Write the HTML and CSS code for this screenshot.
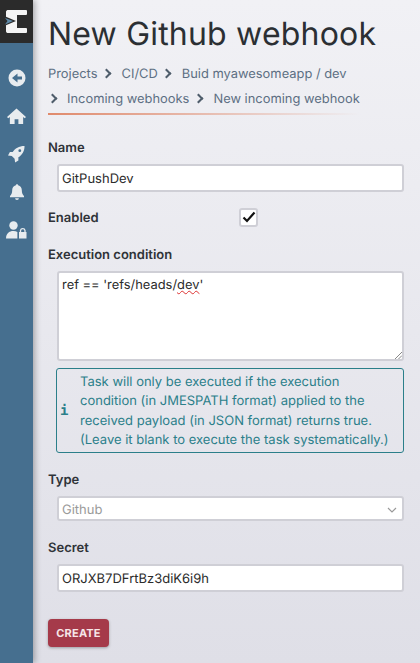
FILE: index.html
```html
<!DOCTYPE html>
<html lang="en">
<head>
  <meta charset="UTF-8">
  <title>New Github webhook</title>
  <link rel="stylesheet" href="styles.css">
</head>
<body>
  <nav class="sidebar">
    <div class="logo">
      <svg width="33" height="42" viewBox="0 0 33 42">
        <path d="M8 10h18a1 1 0 011 1v3a1 1 0 01-1 1H17v13h9a1 1 0 011 1v3a1 1 0 01-1 1H8c-1 0-1.500-.5-2-1.500V11.500C6.500 10.500 7 10 8 10z" fill="#f4f4f4"/>
        <path d="M3 15.500L16 21 3 26.500z" fill="#2b2b2b"/>
        <path d="M5 18l8 3-8 3.500 2.500-3.500z" fill="#5f8aa8"/>
      </svg>
    </div>
    <div class="nav-icons">
      <svg width="18" height="18" viewBox="0 0 18 18"><circle cx="9" cy="9" r="8.500" fill="#e8ecef"/><path d="M9.500 4.500v2.900h4.500v3.200H9.500v2.900L4 9z" fill="#466f8f"/></svg>
      <svg width="19" height="18" viewBox="0 0 20 18"><path d="M10 1L0 10l1.300 1.300L3 10v7.500h5v-5h4v5h5V10l1.700 1.300L20 10z" fill="#e8ecef"/></svg>
      <svg width="17" height="18" viewBox="0 0 18 18"><path fill-rule="evenodd" d="M17.500.500c-6 0-10 2.500-12.500 6.500H2L0 10.500l4 .5 3 3 .5 4 3.500-2v-3.500c4-2.500 6.500-6.500 6.500-12zM12.500 4a1.500 1.500 0 110 3 1.500 1.500 0 010-3z" fill="#e8ecef"/></svg>
      <svg width="14" height="18" viewBox="0 0 16 18"><path d="M8 0c-.8 0-1.300.6-1.300 1.300C4 2 2.500 4.300 2.500 7c0 3.500-1 5-2.500 6.500V15h16v-1.500C14.500 12 13.500 10.500 13.500 7c0-2.700-1.500-5-4.200-5.700C9.300.6 8.800 0 8 0zM5.800 16a2.200 2 0 004.400 0z" fill="#e8ecef"/></svg>
      <svg width="21" height="18" viewBox="0 0 21 18"><circle cx="7.500" cy="4.500" r="4.200" fill="#e8ecef"/><path d="M0 17.500c0-5 3-7.500 7.500-7.500 1.500 0 2.800.3 3.900.9V17.500z" fill="#e8ecef"/><path d="M13 11h7.500v6.500H13z" fill="#e8ecef"/><path d="M14.500 11V9.500a2.300 2.300 0 014.500 0V11" fill="none" stroke="#e8ecef" stroke-width="1.300"/></svg>
    </div>
  </nav>

  <main class="content">
    <h1>New Github webhook</h1>
    <div class="breadcrumb">
      <span class="crumb">Projects</span>
      <span class="crumb"><span class="sep"></span>CI/CD</span>
      <span class="crumb"><span class="sep"></span>Buid myawesomeapp / dev</span>
      <span class="crumb"><span class="sep"></span>Incoming webhooks</span>
      <span class="crumb"><span class="sep"></span>New incoming webhook</span>
    </div>
    <div class="title-rule"></div>

    <form class="form">
      <label class="label">Name</label>
      <input class="field" type="text" value="GitPushDev">

      <div class="enabled-row">
        <label class="label enabled-label">Enabled</label>
        <span class="checkbox">
          <svg width="14" height="12" viewBox="0 0 14 12"><path d="M1.500 6.500l3.500 3.500 7.500-8.500" fill="none" stroke="#111" stroke-width="2.200"/></svg>
        </span>
      </div>

      <label class="label condition-label">Execution condition</label>
      <div class="textarea">
        <span>ref == 'refs/heads/<span class="misspelled">dev</span>'</span>
        <svg class="grip" width="7" height="7" viewBox="0 0 7 7"><path d="M7 0L0 7M7 3.500L3.500 7" stroke="#888" stroke-width="1"/></svg>
      </div>

      <div class="info">
        <span class="info-icon">i</span>
        <p>Task will only be executed if the execution condition (in JMESPATH format) applied to the received payload (in JSON format) returns true. (Leave it blank to execute the task systematically.)</p>
      </div>

      <label class="label type-label">Type</label>
      <div class="field select">
        <span>Github</span>
        <svg width="10" height="6" viewBox="0 0 10 6"><path d="M1 1l4 4 4-4" fill="none" stroke="#999" stroke-width="1.200"/></svg>
      </div>

      <label class="label secret-label">Secret</label>
      <input class="field" type="text" value="ORJXB7DFrtBz3diK6i9h">

      <button type="button" class="create-btn">CREATE</button>
    </form>
  </main>
</body>
</html>
```

FILE: styles.css
```css
* {
  box-sizing: border-box;
  text-rendering: geometricPrecision;
}

html, body {
  height: 100%;
}

body {
  margin: 0;
  display: flex;
  height: 663px;
  overflow: hidden;
  font-family: Inter, "Liberation Sans", sans-serif;
  background: linear-gradient(#f1f1f5, #dfdfe7);
  color: #212529;
}

.sidebar {
  width: 33px;
  flex-shrink: 0;
  background: #466f8f;
  box-shadow: 2px 0 6px rgba(0, 0, 0, 0.3);
}

.logo {
  height: 43px;
  background: #2b2b2b;
}

.logo svg {
  display: block;
}

.nav-icons {
  display: flex;
  flex-direction: column;
  align-items: center;
  gap: 20px;
  padding-top: 26px;
}

.content {
  flex: 1;
  padding: 0 16px 0 15px;
}

h1 {
  margin: 13px 0 0;
  font-size: 32px;
  font-weight: 400;
  line-height: 42px;
  letter-spacing: 0.2px;
  color: #2b2f33;
}

.breadcrumb {
  display: flex;
  flex-wrap: wrap;
  column-gap: 5px;
  margin-top: 7px;
  font-size: 12.900px;
  line-height: 25px;
  color: #5d6f83;
}

.crumb {
  white-space: nowrap;
}

.sep {
  display: inline-block;
  width: 7px;
  height: 7px;
  margin: 0 11.500px 1px 0.500px;
  border-top: 2px solid #4f5d6b;
  border-right: 2px solid #4f5d6b;
  transform: rotate(45deg);
}

.title-rule {
  height: 2px;
  width: 312px;
  margin-top: 1px;
  background: linear-gradient(to right, #e08a6c, rgba(224, 138, 108, 0));
}

.label {
  display: block;
  padding-top: 1px;
  font-size: 13px;
  font-weight: 600;
  line-height: 16px;
  color: #2f3338;
}

.form {
  padding-top: 24px;
}

.field {
  display: block;
  width: 347px;
  height: 28px;
  margin: 8px 0 0 9px;
  padding: 2px 3px 0;
  font: 13px Inter, "Liberation Sans", sans-serif;
  color: #2b2b2b;
  background: #fff;
  border: 2px solid #cfcfd6;
  border-radius: 3px;
}

.enabled-row {
  display: flex;
  align-items: center;
  margin-top: 12px;
  height: 26px;
}

.enabled-label {
  width: 191px;
  padding-top: 2px;
}

.checkbox {
  display: flex;
  align-items: center;
  justify-content: center;
  width: 19px;
  height: 19px;
  background: #fff;
  border: 2px solid #cfcfd6;
  border-radius: 3px;
}

.condition-label {
  margin-top: 16px;
}

.textarea {
  position: relative;
  width: 347px;
  height: 90px;
  margin: 8px 0 0 9px;
  padding: 5px 3px;
  font-size: 12.900px;
  line-height: 16px;
  color: #2b2b2b;
  background: #fff;
  border: 2px solid #cfcfd6;
  border-radius: 3px;
}

.misspelled {
  text-decoration: underline wavy #d33;
  text-decoration-thickness: 1px;
}

.grip {
  position: absolute;
  right: 0;
  bottom: 0;
}

.info {
  display: flex;
  align-items: center;
  width: 348px;
  height: 85px;
  margin: 7px 0 0 8px;
  padding: 0 8px 0 3px;
  border: 1px solid #2b7f8a;
  border-radius: 3px;
  color: #2b7f8a;
}

.info-icon {
  width: 20px;
  flex-shrink: 0;
  font: bold 14px "DejaVu Sans Mono", monospace;
}

.info p {
  margin: 0;
  padding-top: 2px;
  font-size: 13px;
  line-height: 19.500px;
}

.type-label {
  margin-top: 18px;
}

.select {
  display: flex;
  align-items: center;
  justify-content: space-between;
  height: 25px;
  margin-top: 8px;
  padding-right: 5px;
  color: #9a9a9a;
}

.secret-label {
  margin-top: 18px;
}

.create-btn {
  display: block;
  margin-top: 27px;
  width: 61px;
  height: 28px;
  padding: 0;
  font: 700 11px Inter, "Liberation Sans", sans-serif;
  letter-spacing: 0.2px;
  color: #f6e6e8;
  background: #a53a4a;
  border: none;
  border-radius: 4px;
  box-shadow: 0 1px 3px rgba(0, 0, 0, 0.3);
}
```
